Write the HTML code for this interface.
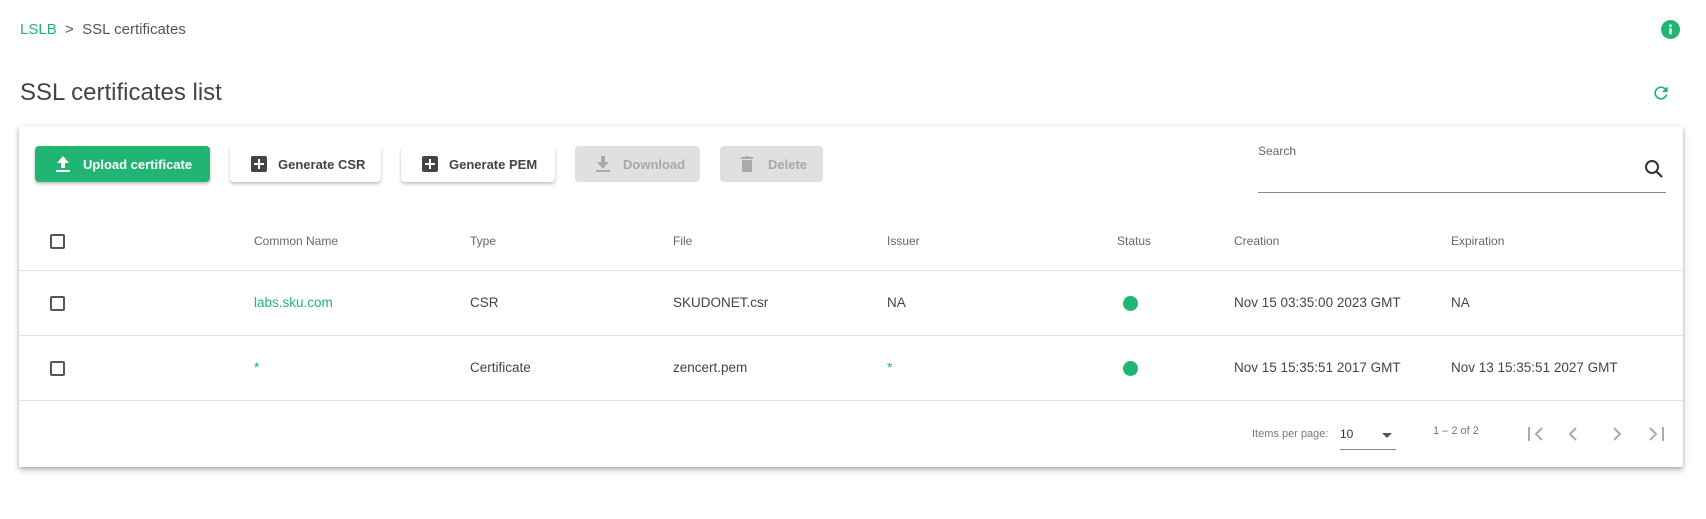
<!DOCTYPE html>
<html><head><meta charset="utf-8"><style>
*{box-sizing:border-box;margin:0;padding:0}
body{width:1706px;height:519px;background:#fff;font-family:"Liberation Sans",sans-serif;color:#444;position:relative;overflow:hidden}
.a{position:absolute;white-space:nowrap}
.card{position:absolute;left:19px;top:126px;width:1664px;height:341px;background:#fff;box-shadow:0 3px 6px rgba(0,0,0,.25),0 1px 3px rgba(0,0,0,.15)}
.btn{position:absolute;top:20px;height:36px;border-radius:4px;font-size:13px;font-weight:bold;display:flex;align-items:center;box-shadow:0 2px 3px rgba(0,0,0,.25);background:#fff;color:#444}
.btn svg{position:absolute;left:21px;top:10px}
.btn span{position:absolute;left:48px}
.dis{background:#e0e0e0;color:#a8a8a8;box-shadow:none}
.hd{font-size:12px;color:#666}
.line{position:absolute;left:0;width:1664px;height:1px;background:#e0e0e0}
.cb{position:absolute;left:31px;width:15px;height:15px;border:2px solid #555;border-radius:2px}
.cell{font-size:13.5px;color:#444}
.dot{position:absolute;width:15px;height:15px;border-radius:50%;background:#21b573}
</style></head><body>
<div class="a" style="left:20px;top:21px;font-size:15px"><span style="color:#21b573">LSLB</span> <span style="color:#555">&nbsp;&gt;&nbsp; SSL certificates</span></div>
<svg class="a" style="left:1661px;top:20px" width="19" height="19"><circle cx="9.5" cy="9.5" r="9.5" fill="#21b573"/><rect x="8.3" y="8.3" width="2.4" height="6" fill="#fff"/><rect x="8.3" y="4.5" width="2.4" height="2.4" fill="#fff"/></svg>
<div class="a" style="left:20px;top:79px;font-size:24px;color:#444">SSL certificates list</div>
<svg class="a" style="left:1651px;top:83px" width="20" height="20" viewBox="0 0 24 24"><path d="M17.65 6.35A7.96 7.96 0 0 0 12 4a8 8 0 1 0 7.73 10h-2.08A6 6 0 1 1 12 6c1.66 0 3.14.69 4.22 1.78L13 11h7V4z" fill="#21b573"/></svg>
<div class="card">
 <div class="btn" style="left:16px;width:175px;background:#21b573;color:#fff"><svg width="14" height="16" viewBox="0 0 14 16"><path d="M7 0L1 7h4v5h4V7h4z M0 14h14v2H0z" fill="#fff"/></svg><span>Upload certificate</span></div>
 <div class="btn" style="left:211px;width:151px"><svg width="16" height="16"><rect width="16" height="16" rx="2" fill="#444"/><path d="M8 3v10M3 8h10" stroke="#fff" stroke-width="2"/></svg><span>Generate CSR</span></div>
 <div class="btn" style="left:382px;width:154px"><svg width="16" height="16"><rect width="16" height="16" rx="2" fill="#444"/><path d="M8 3v10M3 8h10" stroke="#fff" stroke-width="2"/></svg><span>Generate PEM</span></div>
 <div class="btn dis" style="left:556px;width:125px"><svg width="14" height="16" viewBox="0 0 14 16"><path d="M5 0h4v6h4l-6 7-6-7h4z M0 14h14v2H0z" fill="#aaa"/></svg><span>Download</span></div>
 <div class="btn dis" style="left:701px;width:103px"><svg width="12" height="16" viewBox="0 0 12 16"><path d="M1 4h10v12H1z M0 1h4l1-1h2l1 1h4v2H0z" fill="#aaa"/></svg><span>Delete</span></div>
 <div class="a" style="left:1239px;top:18px;font-size:12px;color:#666">Search</div>
 <svg class="a" style="left:1625px;top:33px" width="20" height="20" viewBox="0 0 20 20"><circle cx="8" cy="8" r="6" stroke="#333" stroke-width="2" fill="none"/><path d="M12.5 12.5l5.5 5.5" stroke="#333" stroke-width="2.2"/></svg>
 <div class="a" style="left:1239px;top:66px;width:408px;height:1px;background:#888"></div>
 <div class="cb" style="top:108px"></div>
 <div class="a hd" style="left:235px;top:108px">Common Name</div>
 <div class="a hd" style="left:451px;top:108px">Type</div>
 <div class="a hd" style="left:654px;top:108px">File</div>
 <div class="a hd" style="left:868px;top:108px">Issuer</div>
 <div class="a hd" style="left:1098px;top:108px">Status</div>
 <div class="a hd" style="left:1215px;top:108px">Creation</div>
 <div class="a hd" style="left:1432px;top:108px">Expiration</div>
 <div class="line" style="top:144px"></div>
 <div class="cb" style="top:170px"></div>
 <div class="a cell" style="left:235px;top:169px;color:#21b573">labs.sku.com</div>
 <div class="a cell" style="left:451px;top:169px">CSR</div>
 <div class="a cell" style="left:654px;top:169px">SKUDONET.csr</div>
 <div class="a cell" style="left:868px;top:169px">NA</div>
 <div class="dot" style="left:1104px;top:170px"></div>
 <div class="a cell" style="left:1215px;top:169px">Nov 15 03:35:00 2023 GMT</div>
 <div class="a cell" style="left:1432px;top:169px">NA</div>
 <div class="line" style="top:209px"></div>
 <div class="cb" style="top:235px"></div>
 <div class="a cell" style="left:235px;top:234px;color:#21b573">*</div>
 <div class="a cell" style="left:451px;top:234px">Certificate</div>
 <div class="a cell" style="left:654px;top:234px">zencert.pem</div>
 <div class="a cell" style="left:868px;top:234px;color:#21b573">*</div>
 <div class="dot" style="left:1104px;top:235px"></div>
 <div class="a cell" style="left:1215px;top:234px">Nov 15 15:35:51 2017 GMT</div>
 <div class="a cell" style="left:1432px;top:234px">Nov 13 15:35:51 2027 GMT</div>
 <div class="line" style="top:274px"></div>
 <div class="a" style="left:1233px;top:302px;font-size:11px;color:#777">Items per page:</div>
 <div class="a" style="left:1321px;top:301px;font-size:12px;color:#333">10</div>
 <svg class="a" style="left:1363px;top:307px" width="12" height="6"><path d="M0 0h10L5 5z" fill="#555"/></svg>
 <div class="a" style="left:1321px;top:323px;width:56px;height:1px;background:#888"></div>
 <div class="a" style="left:1414px;top:299px;font-size:11px;color:#777">1 – 2 of 2</div>
 <svg class="a" style="left:1507px;top:300px" width="140" height="16" viewBox="0 0 140 16" fill="none" stroke="#aaa" stroke-width="2"><path d="M3 1v14M16 2l-6 6 6 6"/><path d="M50 2l-6 6 6 6"/><path d="M88 2l6 6-6 6"/><path d="M124 2l6 6-6 6M137 1v14"/></svg>
</div>
</body></html>
